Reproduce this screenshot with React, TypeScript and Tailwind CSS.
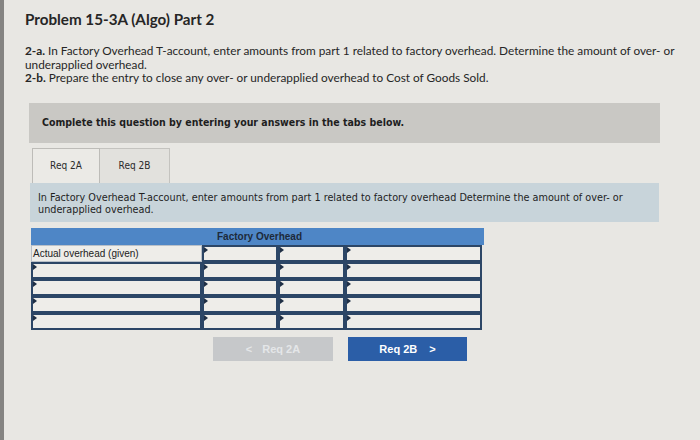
import React from 'react';

const cond = { fontFamily: '"DejaVu Sans Condensed", "DejaVu Sans", sans-serif', fontStretch: 'condensed' } as React.CSSProperties;

function Cell({ w, label, plain = false }: { w: string; label?: string; plain?: boolean }) {
  return (
    <div
      className={`relative h-full ${w} ${plain ? 'border border-[#b9c0c8]' : 'border-2 border-[#2c4666]'} bg-[#eeede9] flex items-center`}
    >
      {!plain && (
        <span className="absolute left-0 top-0 w-0 h-0 border-t-[3px] border-b-[3px] border-l-[4px] border-t-transparent border-b-transparent border-l-[#1f2f45]" />
      )}
      {label && <span className="pl-[1px] text-[10px] text-[#222] font-['Liberation_Sans',sans-serif]">{label}</span>}
    </div>
  );
}

function Row({ first = false }: { first?: boolean }) {
  return (
    <div className="flex h-[17px]">
      <Cell w="w-[171px]" label={first ? 'Actual overhead (given)' : undefined} plain={first} />
      <Cell w="w-[76px]" />
      <Cell w="w-[67px]" />
      <Cell w="w-[137px]" />
    </div>
  );
}

export default function App() {
  return (
    <div className="w-[700px] h-[440px] flex overflow-hidden bg-[#e8e7e3]">
      <div className="w-[4px] shrink-0 bg-[#858482]" />
      <div className="flex-1 pl-[21px] pt-[7px] font-['Lato',sans-serif] text-[#262626]">
        <h1 className="text-[15.2px] leading-[24px] font-bold">Problem 15-3A (Algo) Part 2</h1>

        <div className="mt-[13px] text-[11.8px] leading-[13.6px]">
          <p>
            <b>2-a.</b> In Factory Overhead T-account, enter amounts from part 1 related to factory overhead. Determine the amount of over- or underapplied overhead.
          </p>
          <p>
            <b>2-b.</b> Prepare the entry to close any over- or underapplied overhead to Cost of Goods Sold.
          </p>
        </div>

        <div className="ml-[4px] mt-[18px] w-[631px] h-[40px] bg-[#c9c8c4] pl-[13px] flex items-center">
          <span style={cond} className="text-[10.5px] font-bold text-[#1e1e1e]">
            Complete this question by entering your answers in the tabs below.
          </span>
        </div>

        <div className="ml-[7px] mt-[5px] flex h-[35px]" style={cond}>
          <div className="w-[68px] bg-[#ebeae6] border border-b-0 border-[#bdbcb8] flex items-center justify-center text-[10px] text-[#2a2a2a]">
            Req 2A
          </div>
          <div className="w-[70px] bg-[#e2e1dd] border border-l-0 border-b-0 border-[#c4c3bf] flex items-center justify-center text-[10px] text-[#2a2a2a]">
            Req 2B
          </div>
        </div>

        <div className="ml-[5px] w-[629px] h-[39px] bg-[#c8d4da] pl-[8px] pt-[9px]" style={cond}>
          <p className="text-[10.75px] leading-[12.5px] text-[#1f1f1f]">
            In Factory Overhead T-account, enter amounts from part 1 related to factory overhead Determine the amount of over- or
            <br />
            underapplied overhead.
          </p>
        </div>

        <div className="ml-[6px] mt-[6px] w-[453px]">
          <div className="h-[17px] bg-[#4e86c6] flex">
            <div className="w-[186px]" />
            <div className="text-[10px] leading-[17px] font-bold text-[#1d2a3a] font-['Liberation_Sans',sans-serif]">
              Factory Overhead
            </div>
          </div>
          <Row first />
          <Row />
          <Row />
          <Row />
          <Row />
        </div>

        <div className="mt-[7px] ml-[188px] flex gap-[15px] font-['Liberation_Sans',sans-serif] text-[11px] font-bold">
          <button className="w-[120px] h-[24px] bg-[#c6c8ca] text-[#e4e6e8] flex items-center justify-center gap-[10px]">
            <span>&lt;</span>
            <span>Req 2A</span>
          </button>
          <button className="w-[119px] h-[24px] bg-[#2b5ea7] text-white flex items-center justify-center gap-[12px]">
            <span>Req 2B</span>
            <span>&gt;</span>
          </button>
        </div>
      </div>
    </div>
  );
}
